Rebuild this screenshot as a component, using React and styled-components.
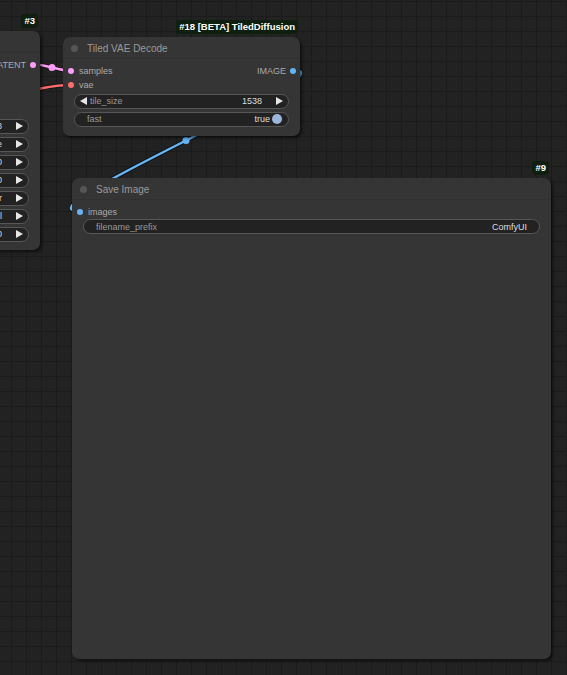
import React from "react";
import styled, { createGlobalStyle } from "styled-components";

const TYPE_COLORS = {
  LATENT: "#ff9cf9",
  VAE: "#ff6e6e",
  IMAGE: "#64b5f6",
};

const GlobalStyle = createGlobalStyle`
  html, body {
    margin: 0;
    padding: 0;
    background: #222;
  }
  body {
    font-family: "Liberation Sans", Arial, sans-serif;
  }
`;

const Canvas = styled.div`
  position: relative;
  width: 567px;
  height: 675px;
  overflow: hidden;
  background-color: #222;
  background-image: linear-gradient(#1b1b1b 1px, transparent 1px),
    linear-gradient(90deg, #1b1b1b 1px, transparent 1px);
  background-size: 15px 15px;
  background-position: 11px 1px;
`;

const LinkLayer = styled.svg`
  position: absolute;
  inset: 0;
  width: 100%;
  height: 100%;
`;

const NodeBox = styled.div`
  position: absolute;
  left: ${(p) => p.$x}px;
  top: ${(p) => p.$y}px;
  width: ${(p) => p.$w}px;
  height: ${(p) => p.$h}px;
  background: #353535;
  border-radius: 7px;
  box-shadow: 2px 2px 3px rgba(0, 0, 0, 0.55);
  display: flex;
  flex-direction: column;
`;

const Badge = styled.div`
  position: absolute;
  right: 2px;
  bottom: calc(100% + 3px);
  height: 14px;
  padding: 0 3px;
  background: #0f1f0f;
  border-radius: 4px;
  color: #fff;
  font-size: 9.5px;
  font-weight: bold;
  line-height: 14px;
  white-space: nowrap;
`;

const TitleBar = styled.div`
  flex: none;
  height: 22px;
  box-sizing: border-box;
  display: flex;
  align-items: center;
  gap: 9px;
  padding-left: 8px;
  padding-top: 1px;
  border-bottom: 1px solid #313131;
  color: #999;
  font-size: 10px;
  white-space: nowrap;
`;

const TitleDot = styled.span`
  width: 7px;
  height: 7px;
  border-radius: 50%;
  background: #555;
  flex: none;
`;

const Slots = styled.div`
  padding-top: 5px;
  display: flex;
  flex-direction: column;
`;

const SlotRow = styled.div`
  height: 14px;
  display: flex;
  align-items: center;
  justify-content: space-between;
  font-size: 9px;
  color: #aaa;
  white-space: nowrap;
`;

const Slot = styled.div`
  display: flex;
  align-items: center;
  gap: ${(p) => (p.$out ? 4 : 5)}px;
  flex-direction: ${(p) => (p.$out ? "row-reverse" : "row")};
  padding: ${(p) => (p.$out ? "0 4px 0 0" : "0 0 0 5px")};
`;

const SlotDot = styled.span`
  width: 6px;
  height: 6px;
  border-radius: 50%;
  background: ${(p) => p.$color};
  flex: none;
`;

const Widgets = styled.div`
  display: flex;
  flex-direction: column;
  gap: 3px;
  padding: 0 11px;
  margin-top: ${(p) => p.$top}px;
`;

const WidgetRow = styled.div`
  height: 15px;
  box-sizing: border-box;
  border: 1px solid #575757;
  border-radius: 8px;
  background: #222;
  display: flex;
  align-items: center;
  padding: 0 ${(p) => p.$pr}px 0 ${(p) => p.$pl}px;
  font-size: 9px;
  white-space: nowrap;
  overflow: hidden;
`;

const Label = styled.span`
  color: #999;
  margin-left: ${(p) => p.$ml || 0}px;
  flex: 1;
`;

const Value = styled.span`
  color: #ddd;
  margin-right: ${(p) => p.$mr || 0}px;
`;

const Arrow = styled.span`
  width: 0;
  height: 0;
  flex: none;
  border-top: 4px solid transparent;
  border-bottom: 4px solid transparent;
  ${(p) =>
    p.$dir === "left"
      ? "border-right: 7px solid #e6e6e6;"
      : "border-left: 7px solid #e6e6e6;"}
`;

const Toggle = styled.span`
  width: 10px;
  height: 10px;
  border-radius: 50%;
  flex: none;
  margin-left: 2px;
  background-color: #9ab6d8;
  background-image: radial-gradient(#62738a 35%, transparent 45%);
  background-size: 2px 2px;
`;

const NumberWidget = ({ label, value }) => (
  <WidgetRow $pl={5} $pr={5}>
    <Arrow $dir="left" />
    <Label $ml={3}>{label}</Label>
    <Value $mr={14}>{value}</Value>
    <Arrow $dir="right" />
  </WidgetRow>
);

const ToggleWidget = ({ label, value }) => (
  <WidgetRow $pl={12} $pr={6}>
    <Label>{label}</Label>
    <Value>{value ? "true" : "false"}</Value>
    <Toggle />
  </WidgetRow>
);

const TextWidget = ({ label, value }) => (
  <WidgetRow $pl={12} $pr={12}>
    <Label>{label}</Label>
    <Value>{value}</Value>
  </WidgetRow>
);

const Node = ({ id, title, x, y, w, h, rows, widgetsTop, children }) => (
  <NodeBox $x={x} $y={y} $w={w} $h={h}>
    <Badge>{id}</Badge>
    <TitleBar>
      <TitleDot />
      {title}
    </TitleBar>
    <Slots>
      {rows.map((r, i) => (
        <SlotRow key={i}>
          {r.in ? (
            <Slot>
              <SlotDot $color={TYPE_COLORS[r.in.type]} />
              {r.in.name}
            </Slot>
          ) : (
            <span />
          )}
          {r.out && (
            <Slot $out>
              <SlotDot $color={TYPE_COLORS[r.out.type]} />
              {r.out.name}
            </Slot>
          )}
        </SlotRow>
      ))}
    </Slots>
    <Widgets $top={widgetsTop}>{children}</Widgets>
  </NodeBox>
);

// litegraph style spline between two slots
const spline = (a, b) => {
  const d = Math.hypot(b[0] - a[0], b[1] - a[1]) * 0.25;
  return `M${a[0]},${a[1]} C${a[0] + d},${a[1]} ${b[0] - d},${b[1]} ${b[0]},${b[1]}`;
};

const links = [
  { from: [33, 64], to: [71, 71], type: "LATENT" },
  { from: [-220, 170], to: [71, 85], type: "VAE" },
  { from: [293, 70], to: [79, 211], type: "IMAGE" },
];

const Links = () => (
  <LinkLayer>
    {links.map((l, i) => {
      const d = spline(l.from, l.to);
      const mx = (l.from[0] + l.to[0]) / 2;
      const my = (l.from[1] + l.to[1]) / 2;
      const c = TYPE_COLORS[l.type];
      return (
        <g key={i}>
          <path d={d} fill="none" stroke="rgba(0,0,0,0.45)" strokeWidth="4.5" />
          <path d={d} fill="none" stroke={c} strokeWidth="2.5" />
          <circle cx={mx} cy={my} r="3.5" fill={c} />
        </g>
      );
    })}
  </LinkLayer>
);

export default function App() {
  return (
    <>
      <GlobalStyle />
      <Canvas>
        <Links />

        <Node
          id="#3"
          title="KSampler"
          x={-160}
          y={31}
          w={200}
          h={219}
          widgetsTop={4.5}
          rows={[
            { in: { name: "model", type: "VAE" }, out: { name: "LATENT", type: "LATENT" } },
            { in: { name: "positive", type: "VAE" } },
            { in: { name: "negative", type: "VAE" } },
            { in: { name: "latent_image", type: "LATENT" } },
          ]}
        >
          <NumberWidget label="seed" value="156680208700288" />
          <NumberWidget label="control_after_generate" value="randomize" />
          <NumberWidget label="steps" value="20" />
          <NumberWidget label="cfg" value="8.0" />
          <NumberWidget label="sampler_name" value="euler" />
          <NumberWidget label="scheduler" value="normal" />
          <NumberWidget label="denoise" value="1.00" />
        </Node>

        <Node
          id="#18 [BETA] TiledDiffusion"
          title="Tiled VAE Decode"
          x={63}
          y={37}
          w={237}
          h={99}
          widgetsTop={1.5}
          rows={[
            { in: { name: "samples", type: "LATENT" }, out: { name: "IMAGE", type: "IMAGE" } },
            { in: { name: "vae", type: "VAE" } },
          ]}
        >
          <NumberWidget label="tile_size" value="1538" />
          <ToggleWidget label="fast" value={true} />
        </Node>

        <Node
          id="#9"
          title="Save Image"
          x={72}
          y={178}
          w={479}
          h={481}
          widgetsTop={0}
          rows={[{ in: { name: "images", type: "IMAGE" } }]}
        >
          <TextWidget label="filename_prefix" value="ComfyUI" />
        </Node>
      </Canvas>
    </>
  );
}
